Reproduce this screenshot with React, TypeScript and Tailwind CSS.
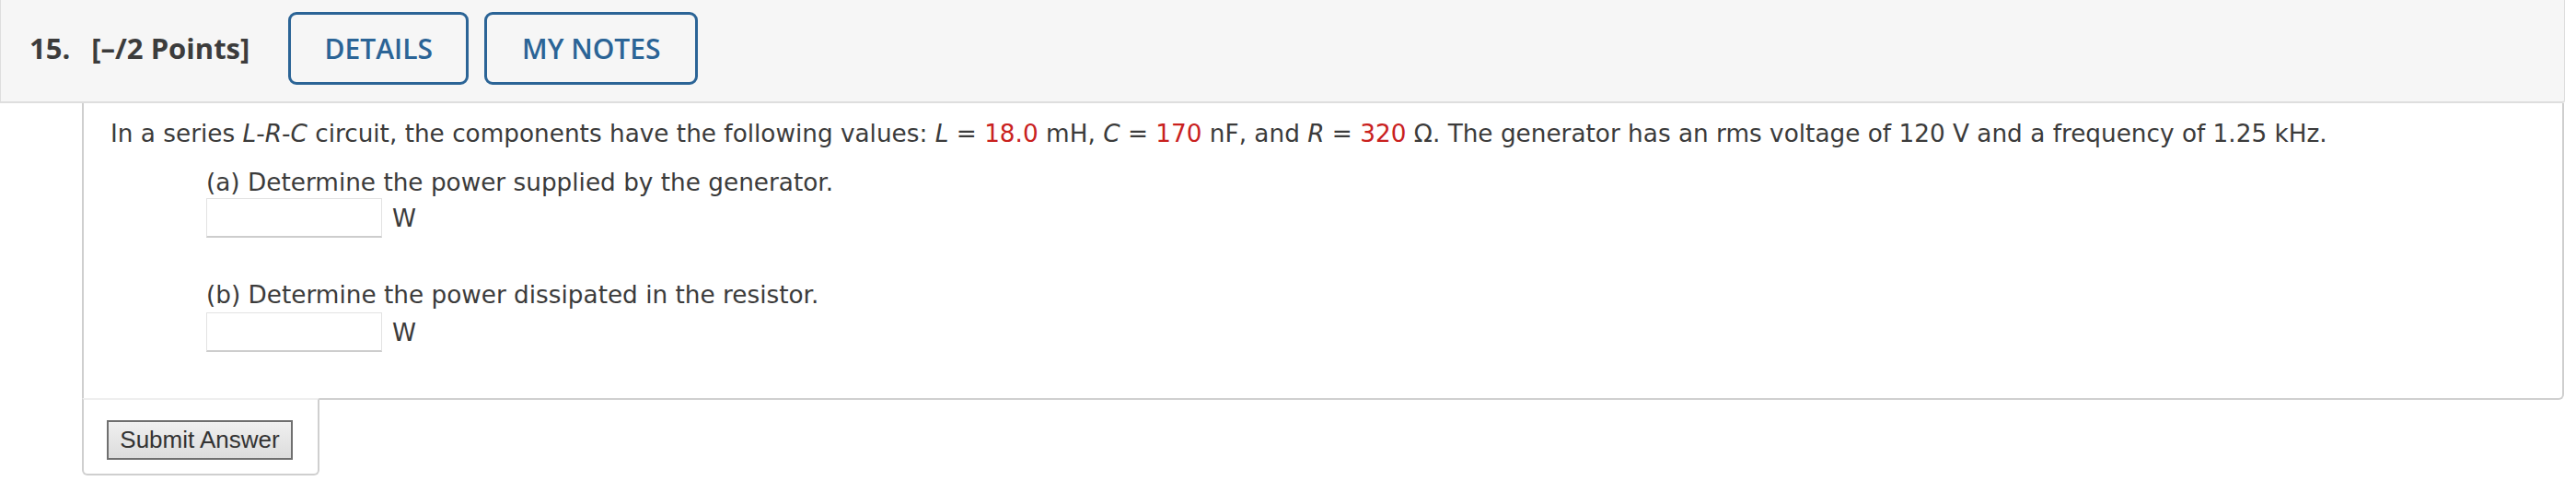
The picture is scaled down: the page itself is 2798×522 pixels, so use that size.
export default function App() {
  const red = 'text-[#c9211e]';

  return (
    <div className="min-h-[522px] w-[2798px] bg-white">
      {/* question header */}
      <div className="mr-[12px] flex h-[112px] items-start rounded-br-[3px] border-b-2 border-l border-r border-[#dedede] bg-[#f6f6f6] pl-[31px] pt-[13px] font-['Open_Sans',sans-serif] text-[#3c3c3c]">
        <div className="flex h-[79px] items-center text-[31px] font-bold">
          <span>15.</span>
          <span className="ml-[23px]">[–/2 Points]</span>
        </div>
        <button className="ml-[42px] h-[79px] w-[196px] rounded-[9px] border-[3px] border-[#2b6496] text-[30px] font-semibold text-[#2b6496]">
          DETAILS
        </button>
        <button className="ml-[17px] h-[79px] w-[232px] rounded-[9px] border-[3px] border-[#2b6496] text-[30px] font-semibold text-[#2b6496]">
          MY NOTES
        </button>
      </div>

      <div className="pl-[89px] pr-[13px] font-['DejaVu_Sans',Verdana,sans-serif] text-[26.3px] text-[#3b3b3b]">
        {/* question body */}
        <div className="rounded-br-[6px] border-b-2 border-l-2 border-r-2 border-[#cfcfcf] pb-[50px] pl-[29px] pt-[15px]">
          <p className="leading-[36px]">
            In a series <i>L</i>-<i>R</i>-<i>C</i> circuit, the components have the following values:{' '}
            <i>L</i> = <span className={red}>18.0</span> mH, <i>C</i> = <span className={red}>170</span> nF, and{' '}
            <i>R</i> = <span className={red}>320</span> Ω. The generator has an rms voltage of 120 V and a frequency of 1.25 kHz.
          </p>

          <div className="ml-[104px] mt-[20px] leading-[30px]">
            <p>(a) Determine the power supplied by the generator.</p>
            <div className="mt-[2px] flex items-center">
              <div className="h-[43px] w-[191px] border border-b-2 border-[#e2e2e2] border-b-[#cdcdcd]" />
              <span className="ml-[11px]">W</span>
            </div>

            <p className="mt-[47px]">(b) Determine the power dissipated in the resistor.</p>
            <div className="mt-[4px] flex items-center">
              <div className="h-[43px] w-[191px] border border-b-2 border-[#e2e2e2] border-b-[#cdcdcd]" />
              <span className="ml-[11px]">W</span>
            </div>
          </div>
        </div>

        {/* submit tab */}
        <div className="-mt-[2px] w-[258px] rounded-b-[6px] border-b-2 border-l-2 border-r-2 border-t-2 border-[#cfcfcf] border-t-[#eeeeee] pb-[15px] pl-[25px] pt-[22px]">
          <button className="h-[43px] w-[202px] border-2 border-[#6f6f6f] bg-gradient-to-b from-[#f0f0f0] to-[#dcdcdc] font-['Liberation_Sans',Arial,sans-serif] text-[26px] text-[#333]">
            Submit Answer
          </button>
        </div>
      </div>
    </div>
  );
}
